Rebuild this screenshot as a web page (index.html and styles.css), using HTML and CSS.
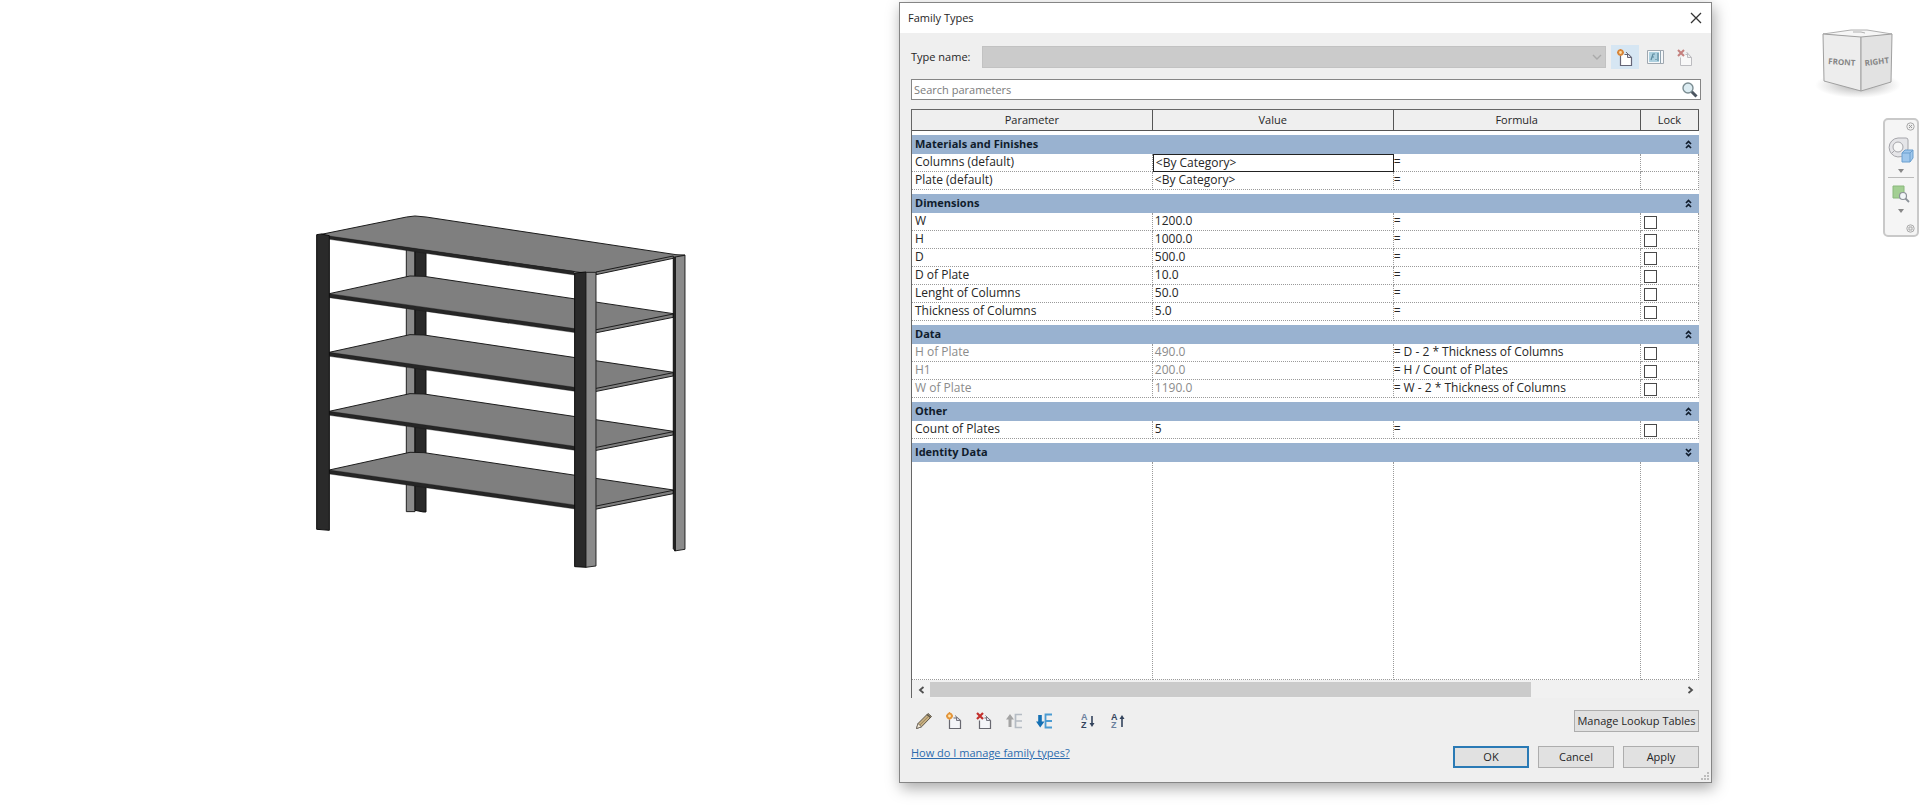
FILE: index.html
```html
<!DOCTYPE html>
<html lang="en">
<head>
<meta charset="utf-8">
<title>Family Types</title>
<link rel="stylesheet" href="styles.css">
</head>
<body>
<main class="workspace">
  <section class="model" aria-label="3D view">
    <svg class="model-view" viewBox="0 0 899 806" role="img" aria-label="Shelving unit">
      <defs>
        <g id="plate">
          <path class="plate-top" d="M88 281L330 228L372 229L1120 341V347L888 394L860 398L88 288Z"/>
          <path class="plate-front" d="M88 281L860 391V403L88 293Z"/>
          <path class="plate-side" d="M860 395L1120 342V352L860 404Z"/>
        </g>
      </defs>
      <g transform="translate(300 200) scale(.3333)">
        <path class="post-light" d="M319 145H345V935H319Z"/>
        <path class="post-dark" d="M345 145H378V936H370L345 931Z"/>
        <use href="#plate" y="529"/>
        <use href="#plate" y="353"/>
        <use href="#plate" y="176"/>
        <use href="#plate"/>
        <path class="post-light" d="M1124 167L1155 165V1048L1124 1053Z"/>
        <path class="post-dark" d="M1120 170H1126V1053L1120 1046Z"/>
        <path class="plate-top" d="M64 103L320 51L345 48L378 51L1128 164L1155 166L1120 172L888 219L860 220L88 111Z"/>
        <path class="plate-front" d="M88 108L823 214V225L88 118Z"/>
        <path class="plate-side" d="M888 216L1120 168V175L888 224Z"/>
        <path class="post-dark" d="M50 104L64 102L88 107V991L50 988Z"/>
        <path class="post-dark" d="M824 219L858 216V1102L824 1100Z"/>
        <path class="post-light" d="M858 217H888V1098L858 1102Z"/>
      </g>
    </svg>
  </section>

  <section class="dialog" role="dialog" aria-labelledby="dialog-title">
    <header class="titlebar">
      <h1 class="title" id="dialog-title">Family Types</h1>
      <button class="close" type="button" aria-label="Close">
        <svg width="12" height="12" viewBox="0 0 12 12"><path d="M1 1L11 11M11 1L1 11" fill="none" stroke="#333" stroke-width="1.3"/></svg>
      </button>
    </header>

    <div class="content">
      <div class="type-row">
        <label class="type-label" for="type-name">Type name:</label>
        <div class="combo">
          <select id="type-name" class="combo-select" disabled></select>
          <svg class="combo-arrow" width="10" height="6" viewBox="0 0 10 6"><path d="M1 1L5 5L9 1" fill="none" stroke="#aaa" stroke-width="1.4"/></svg>
        </div>
        <div class="type-tools">
          <button class="tool tool-active" type="button" aria-label="New type">
            <svg width="16" height="17" viewBox="0 0 16 17"><path d="M3.5 6.5V16.5H14.5V8.500L11.500 5.500H7.500" fill="#fff" stroke="#667" stroke-width="1.2"/><path d="M9 3L14.500 8.500H10.500V5" fill="#dde" stroke="#667"/><circle cx="3.500" cy="3.500" r="2.300" fill="#ffe0a8" stroke="#d8853a" stroke-width="1.8"/><path d="M3.500 0V1.500M3.500 5.500V7M0 3.500H1.500M5.500 3.500H7" stroke="#d8853a" stroke-width="1.400"/></svg>
          </button>
          <button class="tool" type="button" aria-label="Rename type" disabled>
            <svg width="17" height="14" viewBox="0 0 17 14"><path d="M.5.5H16.500V13.500H.5Z" fill="#f6f8fa" stroke="#a0a8b0"/><path d="M2 2H12V12H2Z" fill="#add0df"/><path d="M4 10L6 4H8M5 7H7M9 9V10M11 3V11" fill="none" stroke="#5d8a9f" stroke-width="1.200"/><path d="M13.500 1V13" stroke="#8fa3b0"/></svg>
          </button>
          <button class="tool" type="button" aria-label="Delete type" disabled>
            <svg width="16" height="17" viewBox="0 0 16 17"><path d="M3.500 8.500V16.500H14.500V8.500L11.500 5.500H8.500" fill="#f8f8f8" stroke="#bcbcc0"/><path d="M9.500 3L14.500 8.500H10.500V4" fill="#eee" stroke="#bcbcc0"/><path d="M1 1L7 7M7 1L1 7" stroke="#c4807e" stroke-width="2"/></svg>
          </button>
        </div>
      </div>

      <div class="search">
        <input class="search-input" type="text" placeholder="Search parameters" aria-label="Search parameters">
        <button class="search-button" type="button" aria-label="Search">
          <svg width="16" height="16" viewBox="0 0 16 16"><path d="M9.500 9.500L14.500 14.500" stroke="#4c5560" stroke-width="3"/><circle cx="6" cy="6" r="5" fill="#dcecf2" stroke="#7b8d92" stroke-width="1.400"/></svg>
        </button>
      </div>

      <div class="grid">
        <table class="params">
          <colgroup><col class="col-param"><col class="col-value"><col class="col-formula"><col class="col-lock"></colgroup>
          <thead><tr><th scope="col">Parameter</th><th scope="col">Value</th><th scope="col">Formula</th><th scope="col">Lock</th></tr></thead>
          <tbody id="rows"></tbody>
        </table>
        <div class="scrollbar">
          <button class="scroll-arrow" type="button" aria-label="Scroll left"><svg width="7" height="8" viewBox="0 0 7 8"><path d="M5.500 1L2 4L5.500 7" fill="none" stroke="#505050" stroke-width="1.800"/></svg></button>
          <div class="scroll-track"><div class="scroll-thumb"></div></div>
          <button class="scroll-arrow" type="button" aria-label="Scroll right"><svg width="7" height="8" viewBox="0 0 7 8"><path d="M1.500 1L5 4L1.500 7" fill="none" stroke="#505050" stroke-width="1.800"/></svg></button>
        </div>
      </div>

      <div class="tools-row">
        <div class="toolbar">
          <button class="icon-button" type="button" aria-label="Edit parameter"><svg width="18" height="18" viewBox="0 0 18 18"><path d="M1.500 16.500L3 11.500L13 1.500L16.500 4.500L6.500 14.800Z" fill="#c9b183" stroke="#5b554b"/><path d="M3 11.500L6.500 14.800L1.500 16.500Z" fill="#f6ecda" stroke="#6b655b" stroke-width=".8"/><path d="M12 2.500L15.500 5.500" stroke="#5b554b" stroke-width="1.500"/><path d="M4.800 13L14 3.800" stroke="#8b7750" stroke-width=".8"/></svg></button>
          <button class="icon-button" type="button" aria-label="New parameter"><svg width="16" height="18" viewBox="0 0 16 18"><path d="M3.500 7.500V16.500H14.500V8.500L11.500 6H7.500" fill="#f4f5f8" stroke="#686870" stroke-width="1.200"/><path d="M9 3.500L14.500 8.500H10.500V5" fill="#dde" stroke="#777780"/><circle cx="3.500" cy="4" r="2.300" fill="#ffe7b0" stroke="#e3943a" stroke-width="1.800"/><path d="M3.500 0V2M3.500 6V8M0 4H1.500M5.500 4H7" stroke="#e3943a" stroke-width="1.400"/></svg></button>
          <button class="icon-button" type="button" aria-label="Delete parameter"><svg width="16" height="18" viewBox="0 0 16 18"><path d="M3.500 8.500V16.500H14.500V8.500L11.500 6H8.500" fill="#f4f5f8" stroke="#686870" stroke-width="1.200"/><path d="M9.500 3.500L14.500 8.500H10.500V5" fill="#dde" stroke="#777780"/><path d="M1 1L7 7M7 1L1 7" stroke="#c22f2c" stroke-width="2.200"/></svg></button>
          <button class="icon-button" type="button" aria-label="Move parameter up" disabled><svg width="17" height="18" viewBox="0 0 17 18"><path d="M4 2L8 7.500H5.500V15H2.500V7.500H0Z" fill="#a4a4a4"/><path d="M16 2.500H9.500V15.500H16M9.500 9H16" fill="none" stroke="#b5bcc4" stroke-width="1.700"/></svg></button>
          <button class="icon-button" type="button" aria-label="Move parameter down"><svg width="17" height="18" viewBox="0 0 17 18"><path d="M2.200 3H5.800V9.500H8.500L4.200 15.500L0 9.500H2.200Z" fill="#1470b4"/><path d="M16 2.500H9.500V15.500H16M9.500 9H16" fill="none" stroke="#4a9bd2" stroke-width="1.800"/></svg></button>
          <button class="icon-button sort" type="button" aria-label="Sort ascending"><svg width="14" height="18" viewBox="0 0 14 18"><text class="sort-letter sort-soft" x="0" y="8">A</text><text class="sort-letter" x="0" y="16">Z</text><path d="M11 4V13" stroke="#33435c" stroke-width="1.600"/><path d="M8.500 11H13.500L11 15Z" fill="#33435c"/></svg></button>
          <button class="icon-button" type="button" aria-label="Sort descending"><svg width="14" height="18" viewBox="0 0 14 18"><text class="sort-letter" x="0" y="8">A</text><text class="sort-letter sort-soft" x="0" y="16">Z</text><path d="M11 5V15" stroke="#33435c" stroke-width="1.600"/><path d="M8.500 7H13.500L11 3Z" fill="#33435c"/></svg></button>
        </div>
        <button class="button button-wide" type="button">Manage Lookup Tables</button>
      </div>

      <footer class="actions">
        <a class="help" href="#help">How do I manage family types?</a>
        <button class="button button-default" type="button">OK</button>
        <button class="button" type="button">Cancel</button>
        <button class="button" type="button">Apply</button>
      </footer>
    </div>
    <svg class="grip" width="9" height="9" viewBox="0 0 9 9"><path d="M6 0H8V2H6ZM3 3H5V5H3ZM6 3H8V5H6ZM0 6H2V8H0ZM3 6H5V8H3ZM6 6H8V8H6Z" fill="#bdbdbd"/></svg>
  </section>

  <aside class="view-tools">
    <svg class="cube" width="86" height="76" viewBox="0 0 86 76" role="img" aria-label="View cube">
      <defs><radialGradient id="shadow"><stop offset="0" stop-color="#888" stop-opacity=".75"/><stop offset="1" stop-color="#aaa" stop-opacity="0"/></radialGradient></defs>
      <ellipse cx="43" cy="58" rx="43" ry="13" fill="url(#shadow)"/>
      <path d="M8 7L36 3H52L77 7L46 11Z" fill="#f6f6f6" stroke="#b0b0b0"/>
      <path d="M8 7L46 10V64L9 54Z" fill="#ededed" stroke="#a0a0a0"/>
      <path d="M46 10L77 7L76 55L46 64Z" fill="#e2e2e2" stroke="#a0a0a0"/>
      <path d="M38 5H46L50 6" fill="none" stroke="#b0b0b0"/>
      <text class="cube-text" x="13" y="37" transform="rotate(4 13 37)">FRONT</text>
      <text class="cube-text" x="50" y="39" transform="rotate(-7 50 39)">RIGHT</text>
    </svg>
    <nav class="navbar" aria-label="Navigation bar">
      <button class="nav-dot" type="button" aria-label="Close navigation bar"><svg width="9" height="9" viewBox="0 0 9 9"><circle cx="4.500" cy="4.500" r="3.700" fill="#eee" stroke="#aaa"/><path d="M3 3L6 6M6 3L3 6" stroke="#999"/></svg></button>
      <button class="nav-wheel" type="button" aria-label="Steering wheel"><svg width="26" height="26" viewBox="0 0 26 26"><path d="M10 1H18Q20 1 20 3V12A9.500 9.500 0 1 1 10 1Z" fill="#e5e5e8" stroke="#a5a5aa"/><circle cx="10" cy="10" r="5" fill="#f7f7f7" stroke="#a5a5aa"/><path d="M6.500 13.500L3.500 16.500" stroke="#a5a5aa"/><path d="M14 16L17 13H25V21L22 25H14Z" fill="#9fc7ec" stroke="#6b9fcf"/><path d="M14 16H22V25M22 16L25 13" fill="none" stroke="#6b9fcf"/></svg></button>
      <button class="nav-drop" type="button" aria-label="Steering wheel options"><svg width="6" height="4" viewBox="0 0 6 4"><path d="M0 0H6L3 4Z" fill="#888"/></svg></button>
      <hr class="nav-line">
      <button class="nav-zoom" type="button" aria-label="Zoom"><svg width="18" height="18" viewBox="0 0 18 18"><path d="M1 1H12V13H1Z" fill="#a3cf93" stroke="#8ab87c"/><path d="M13.500 13.500L17 17" stroke="#8c9299" stroke-width="1.800"/><circle cx="11" cy="11" r="3.500" fill="#f2f6f8" stroke="#8c9299" stroke-width="1.200"/></svg></button>
      <button class="nav-drop" type="button" aria-label="Zoom options"><svg width="6" height="4" viewBox="0 0 6 4"><path d="M0 0H6L3 4Z" fill="#888"/></svg></button>
      <button class="nav-dot nav-dot-last" type="button" aria-label="Navigation bar options"><svg width="9" height="9" viewBox="0 0 9 9"><circle cx="4.500" cy="4.500" r="3.700" fill="#eee" stroke="#aaa"/><path d="M3 3H6V6H3Z" fill="none" stroke="#aaa"/></svg></button>
    </nav>
  </aside>
</main>
<script src="app.js"></script>
</body>
</html>
```

FILE: styles.css
```css
* { box-sizing: border-box; }

body {
  margin: 0;
  background: #fff;
  color: #262626;
  font: 11px/16px "Open Sans", "Noto Sans", sans-serif;
}

button, input, select { font: inherit; color: inherit; }
button { padding: 0; border: 0; background: none; }
svg { display: block; }

.workspace {
  display: grid;
  grid-template-columns: 899fr 813fr 208fr;
  min-height: 100vh;
}

.model { overflow: hidden; }
.model-view { width: 100%; height: auto; }
.plate-top { fill: #7f7f7f; stroke: #1c1c1c; stroke-width: 3; }
.plate-front { fill: #262626; stroke: #151515; stroke-width: 1; }
.plate-side { fill: #7f7f7f; stroke: #1c1c1c; stroke-width: 3; }
.post-dark { fill: #2a2a2a; stroke: #0c0c0c; stroke-width: 3; }
.post-light { fill: #8a8a8a; stroke: #222; stroke-width: 3; }

.dialog {
  position: relative;
  display: flex;
  flex-direction: column;
  margin: 2px 0 23px;
  border: 1px solid #858585;
  background: #efefef;
  box-shadow: 2px 5px 14px rgba(0, 0, 0, .35);
}

.titlebar {
  display: flex;
  align-items: center;
  justify-content: space-between;
  height: 30px;
  padding: 0 8px;
  background: #fff;
}
.title { margin: 0; font-size: 11px; font-weight: 400; }
.close { padding: 1px; }

.content {
  display: flex;
  flex: 1;
  flex-direction: column;
  padding: 12px 10px 14px 11px;
}

.type-row { display: flex; align-items: center; height: 24px; }
.type-label { width: 71px; }
.combo { position: relative; flex: 1; }
.combo-select {
  display: block;
  width: 100%;
  height: 22px;
  border: 1px solid #c2c2c2;
  background: #cbcbcb;
  opacity: 1;
  appearance: none;
}
.combo-arrow { position: absolute; top: 8px; right: 4px; }
.type-tools { display: flex; gap: 2px; padding: 0 2px 0 5px; }
.tool {
  display: grid;
  place-items: center;
  width: 28px;
  height: 24px;
}
.tool-active { background: #d6e6f3; }

.search {
  display: flex;
  align-items: center;
  height: 21px;
  margin-top: 10px;
  border: 1px solid #858585;
  background: #fff;
}
.search-input {
  flex: 1;
  height: 19px;
  padding: 0 2px;
  border: 0;
  outline: 0;
  background: none;
}
.search-input::placeholder { color: #7b7b7b; opacity: 1; }
.search-button { margin-right: 2px; }

.grid {
  display: flex;
  flex: 1;
  flex-direction: column;
  margin: 9px 2px 0 0;
  border-top: 1px solid #666;
  border-left: 1px solid #666;
}
.params {
  flex: 1;
  width: 100%;
  border-spacing: 0;
  table-layout: fixed;
  background: #fff;
}
.col-param, .col-value { width: 30.6%; }
.col-formula { width: 31.4%; }
.params th {
  height: 21px;
  padding: 0;
  border: solid #555;
  border-width: 0 1px 1px 0;
  background: #efefef;
  font-weight: 400;
  text-align: center;
}
.params td {
  height: 18px;
  padding: 0 0 1px 3px;
  border: dotted #9a9a9a;
  border-width: 0 1px 1px 0;
  font-size: 12px;
  line-height: 16px;
  vertical-align: top;
  white-space: nowrap;
}
.params td.value { padding-left: 2px; }
.params td.formula { padding-left: 0; }
.params td.lock { padding: 3px 0 0 3px; line-height: 0; }
.params td.selected { padding: 0 0 0 2px; border: 1px solid #222; }
.params .dim .name, .params .dim .value { color: #8b8b8b; }
.params .gap td { height: 4px; padding: 0; border: 0; line-height: 0; }
.params .group td {
  height: 19px;
  padding: 0 7px 0 3px;
  border: 0;
  background: #99b2d0;
  color: #101c2c;
  font-size: 11px;
  font-weight: 700;
  line-height: 18px;
}
.params .filler td { height: auto; }
.group-head { display: flex; align-items: center; justify-content: space-between; }
.group-head.collapsed svg { transform: rotate(180deg); }

.check {
  width: 13px;
  height: 13px;
  margin: 0;
  border: 1px solid #4a4a4a;
  background: #fff;
  appearance: none;
}

.scrollbar { display: flex; height: 18px; padding-top: 2px; background: #f1f1f1; }
.scroll-arrow { display: grid; place-items: center; width: 18px; }
.scroll-track { flex: 1; }
.scroll-thumb { width: 80%; height: 15px; background: #cbcbcb; }

.tools-row { display: flex; align-items: center; justify-content: space-between; margin: 12px 2px 0 0; }
.toolbar { display: flex; align-items: center; gap: 12px; padding-left: 4px; }
.icon-button { display: grid; place-items: center; width: 18px; height: 18px; }
.sort { margin-left: 14px; }
.sort-letter { fill: #33435c; font: 700 9px "Liberation Sans", sans-serif; }
.sort-soft { fill: #6a7f9d; }

.button {
  width: 76px;
  height: 22px;
  border: 1px solid #adadad;
  background: #e1e1e1;
  line-height: 18px;
  white-space: nowrap;
}
.button-wide { width: 125px; }
.button-default { border: 2px solid #2a7ab5; }

.actions { display: flex; gap: 9px; margin: 14px 2px 0 0; }
.help { margin-right: auto; color: #2c6cae; line-height: 14px; }
.grip { position: absolute; right: 1px; bottom: 1px; }

.view-tools {
  display: flex;
  flex-direction: column;
  align-items: flex-end;
  padding-top: 27px;
}
.cube { margin-right: 19px; }
.cube-text { fill: #858585; font: 700 8px "Open Sans", sans-serif; }
.navbar {
  display: flex;
  flex-direction: column;
  align-items: center;
  width: 36px;
  height: 119px;
  margin: 15px 1px 0 0;
  padding: 2px;
  border: 2px solid #c9c9c9;
  border-radius: 5px;
  background: #f5f5f5;
}
.nav-dot { align-self: flex-end; }
.nav-dot-last { margin-top: auto; }
.nav-wheel { margin-top: 6px; }
.nav-drop { margin-top: 6px; }
.nav-line { width: 26px; margin: 4px 0 0; border: 0; border-top: 1px solid #bbb; }
.nav-zoom { margin-top: 7px; }
```

FILE: app.js
```js
const groups = [
  { title: "Materials and Finishes", rows: [
    { name: "Columns (default)", value: "<By Category>", noLock: true, selected: true },
    { name: "Plate (default)", value: "<By Category>", noLock: true },
  ] },
  { title: "Dimensions", rows: [
    { name: "W", value: "1200.0" },
    { name: "H", value: "1000.0" },
    { name: "D", value: "500.0" },
    { name: "D of Plate", value: "10.0" },
    { name: "Lenght of Columns", value: "50.0" },
    { name: "Thickness of Columns", value: "5.0" },
  ] },
  { title: "Data", rows: [
    { name: "H of Plate", value: "490.0", formula: "D - 2 * Thickness of Columns", dim: true },
    { name: "H1", value: "200.0", formula: "H / Count of Plates", dim: true },
    { name: "W of Plate", value: "1190.0", formula: "W - 2 * Thickness of Columns", dim: true },
  ] },
  { title: "Other", rows: [{ name: "Count of Plates", value: "5" }] },
  { title: "Identity Data", rows: [], collapsed: true },
];

const chevrons = '<svg width="7" height="9" viewBox="0 0 7 9"><path d="M1 4L3.500 1.500L6 4M1 8L3.500 5.500L6 8" fill="none" stroke="#101c2c" stroke-width="1.700"/></svg>';
const body = document.getElementById("rows");

function addRow(className) {
  const row = body.insertRow();
  row.className = className;
  return row;
}

function addCell(row, className, text) {
  const cell = row.insertCell();
  cell.className = className;
  cell.textContent = text;
  return cell;
}

for (const group of groups) {
  addRow("gap").insertCell().colSpan = 4;

  const head = addRow("group").insertCell();
  head.colSpan = 4;
  head.innerHTML = `<div class="group-head${group.collapsed ? " collapsed" : ""}"><span>${group.title}</span>${chevrons}</div>`;

  for (const item of group.rows) {
    const row = addRow(item.dim ? "dim" : "");
    addCell(row, "name", item.name);
    addCell(row, item.selected ? "value selected" : "value", item.value);
    addCell(row, "formula", item.formula ? `= ${item.formula}` : "=");
    const lock = addCell(row, "lock", "");
    if (!item.noLock) {
      const box = document.createElement("input");
      box.type = "checkbox";
      box.className = "check";
      box.setAttribute("aria-label", `Lock ${item.name}`);
      lock.append(box);
    }
  }
}

const filler = addRow("filler");
for (let i = 0; i < 4; i += 1) filler.insertCell();
```
